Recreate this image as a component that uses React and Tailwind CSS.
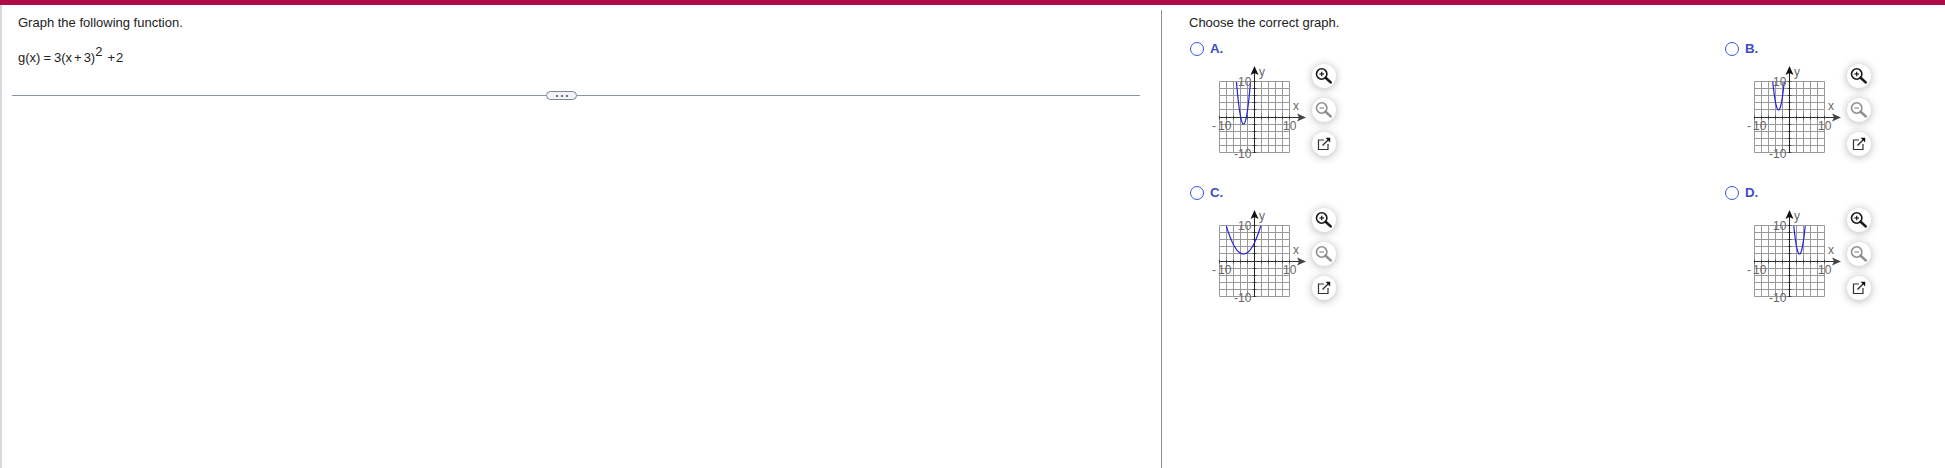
const ORIGIN_X = 55;
const ORIGIN_Y = 56;
const UNIT = 3.5;

// builds the parabola path y = a(x - h)^2 + k, clipped to the top of the grid
const curvePath = ({ a, h, k }) => {
  const reach = Math.sqrt((10 - k) / a);
  const pts = [];
  for (let i = 0; i <= 40; i++) {
    const x = h - reach + (2 * reach * i) / 40;
    const y = a * (x - h) * (x - h) + k;
    pts.push(`${(ORIGIN_X + x * UNIT).toFixed(2)},${(ORIGIN_Y - y * UNIT).toFixed(2)}`);
  }
  return 'M' + pts.join(' L');
};

const Graph = ({ curve }) => {
  const cells = [0, 1, 2, 3, 4, 5, 6, 7, 8, 9, 10];
  return (
    <svg width="110" height="100" viewBox="0 0 110 100" className="block shrink-0">
      {cells.map(i => (
        <line key={'v' + i} x1={20.5 + i * 7} y1="20.5" x2={20.5 + i * 7} y2="91.5" stroke="#999" strokeWidth="1" />
      ))}
      {cells.map(i => (
        <line key={'h' + i} x1="20.5" y1={20.5 + Math.round(i * 7.1)} x2="90.5" y2={20.5 + Math.round(i * 7.1)} stroke="#999" strokeWidth="1" />
      ))}
      {cells.map(i => (
        <line key={'tx' + i} x1={20.5 + i * 7} y1="54.5" x2={20.5 + i * 7} y2="58.5" stroke="#555" strokeWidth="1" />
      ))}
      {cells.map(i => (
        <line key={'ty' + i} x1="53.5" y1={20.5 + Math.round(i * 7.1)} x2="57.5" y2={20.5 + Math.round(i * 7.1)} stroke="#555" strokeWidth="1" />
      ))}
      <line x1="20" y1="56.5" x2="102" y2="56.5" stroke="#333" strokeWidth="1" />
      <line x1="55.5" y1="10" x2="55.5" y2="92" stroke="#222" strokeWidth="1" />
      <path d="M55.5 5 L59.5 14 L55.5 12 L51.5 14 Z" fill="#111" />
      <path d="M107 56.5 L98 52.5 L100 56.5 L98 60.5 Z" fill="#444" />
      <path d={curvePath(curve)} fill="none" stroke="#2222dd" strokeWidth="1.2" />
      <g fontFamily="'Liberation Sans', Arial, sans-serif" fontSize="12" fill="#666">
        <text x="60" y="15">y</text>
        <text x="94" y="49">x</text>
        <text x="39" y="25">10</text>
        <text x="13" y="69">-</text>
        <text x="19" y="69">10</text>
        <text x="84" y="69">10</text>
        <text x="35" y="97">-10</text>
      </g>
    </svg>
  );
};

const RoundButton = ({ children }) => (
  <div className="w-6 h-6 rounded-full bg-white shadow-[0_1px_8px_rgba(0,0,0,0.3)] flex items-center justify-center">
    {children}
  </div>
);

const Magnifier = ({ color, plus }) => (
  <svg width="18" height="18" viewBox="0 0 18 18" fill="none" stroke={color}>
    <circle cx="6.7" cy="7" r="5.2" strokeWidth="1.6" />
    <line x1="10.6" y1="10.7" x2="15.7" y2="15.4" strokeWidth="2.6" strokeLinecap="round" />
    <line x1="4.4" y1="7" x2="9" y2="7" strokeWidth="1.2" />
    {plus && <line x1="6.7" y1="4.7" x2="6.7" y2="9.3" strokeWidth="1.2" />}
  </svg>
);

const Option = ({ letter, curve }) => (
  <div className="w-[535px] h-[144px]">
    <div className="flex items-center gap-[6px] h-[16px] mt-[1px] -mb-[1px] text-[13.3px] font-bold text-[#3d4fc4]">
      <span className="w-[14px] h-[14px] rounded-full border-[1.5px] border-[#3b55d9] bg-white" />
      <span>{letter}.</span>
    </div>
    <div className="flex gap-[3px] ml-[9px] mt-[5px]">
      <Graph curve={curve} />
      <div className="flex flex-col gap-[10px] mt-[3px]">
        <RoundButton>
          <Magnifier color="#1a1a1a" plus />
        </RoundButton>
        <RoundButton>
          <Magnifier color="#8f8f8f" />
        </RoundButton>
        <RoundButton>
          <svg width="14" height="14" viewBox="0 0 14 14" fill="none" stroke="#333" strokeWidth="1.2">
            <path d="M7 3 H1.5 V12.5 H11 V7" />
            <path d="M5.5 8.5 L11 3" strokeWidth="1.5" />
            <path d="M8.5 0.8 H13.2 V5.5 Z" fill="#111" stroke="none" />
          </svg>
        </RoundButton>
      </div>
    </div>
  </div>
);

export default function App() {
  return (
    <div className="h-[468px] w-[1945px] overflow-hidden bg-white text-[13px] text-[#222] font-['Liberation_Sans',Arial,sans-serif]">
      <div className="h-[5px] bg-[#b00a47]" />
      <div className="flex h-[463px]">
        <div className="w-[1161px] shrink-0 border-l-2 border-[#d8d8e0] pt-[10px]">
          <p className="pl-4 h-4 leading-4">Graph the following function.</p>
          <p className="pl-4 mt-[19px] h-4 leading-4 whitespace-nowrap">
            g(x)<span className="ml-[3px]">=</span>
            <span className="ml-[3px]">3(x</span>
            <span className="ml-[2px]">+</span>
            <span className="ml-[2px]">3)</span>
            <sup className="text-[13px] -top-[6px] leading-none">2</sup>
            <span className="ml-[5px]">+</span>
            <span className="ml-[1px]">2</span>
          </p>
          <div className="flex items-center ml-[10px] w-[1128px] mt-[25px]">
            <div className="h-px w-[534px] bg-[#8a93a3]" />
            <div className="w-[31px] h-[9px] rounded-full border border-[#7d8696] bg-[#f2f4f7] flex items-center justify-center gap-[3px]">
              <span className="w-[2px] h-[2px] bg-[#6b7280]" />
              <span className="w-[2px] h-[2px] bg-[#6b7280]" />
              <span className="w-[2px] h-[2px] bg-[#6b7280]" />
            </div>
            <div className="h-px flex-1 bg-[#8a93a3]" />
          </div>
        </div>
        <div className="flex-1 mt-[5px] border-l border-[#8a8f99] pl-[26px] pt-[5px]">
          <p className="h-4 leading-4 ml-[1px]">Choose the correct graph.</p>
          <div className="grid grid-cols-[535px_535px] mt-[9px] ml-[2px]">
            <Option letter="A" curve={{ a: 3, h: -3, k: -2 }} />
            <Option letter="B" curve={{ a: 3, h: -3, k: 2 }} />
            <Option letter="C" curve={{ a: 0.33, h: -3, k: 2 }} />
            <Option letter="D" curve={{ a: 3, h: 3, k: 2 }} />
          </div>
        </div>
      </div>
    </div>
  );
}
